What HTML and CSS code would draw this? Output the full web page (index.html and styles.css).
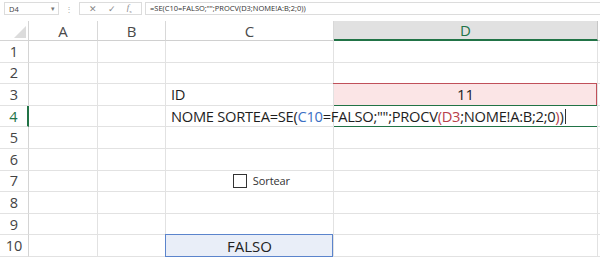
FILE: index.html
```html
<!DOCTYPE html>
<html>
<head>
<meta charset="utf-8">
<link rel="stylesheet" href="styles.css">
</head>
<body>
<div class="app">
  <div class="fbar">
    <div class="namebox"><span>D4</span><span class="arrow">▾</span></div>
    <div class="dots">⋮</div>
    <div class="btns">
      <span class="btn x">✕</span>
      <span class="btn ok">✓</span>
      <span class="btn fx"><i>f</i><sub>x</sub></span>
    </div>
    <div class="finput">=SE(C10=FALSO;"";PROCV(D3;NOME!A:B;2;0))</div>
  </div>
  <div class="sheet">
    <div class="corner"><div class="tri"></div></div>
    <div class="ch">A</div>
    <div class="ch">B</div>
    <div class="ch">C</div>
    <div class="ch sel">D</div>
    <div class="ch end"></div>

    <div class="rh">1</div><div class="c"></div><div class="c"></div><div class="c"></div><div class="c"></div><div class="c end"></div>
    <div class="rh">2</div><div class="c"></div><div class="c"></div><div class="c"></div><div class="c"></div><div class="c end"></div>
    <div class="rh">3</div><div class="c"></div><div class="c"></div><div class="c txt">ID</div><div class="c ref-red">11</div><div class="c end"></div>
    <div class="rh sel">4</div><div class="c"></div><div class="c"></div><div class="c txt">NOME SORTEA=SE(<span class="blue">C10</span>=FALSO;"";PROCV<span class="red">(D3</span>;NOME!A:B;2;0<span class="red">)</span>)<span class="caret"></span></div><div class="c active"></div><div class="c end"></div>
    <div class="rh">5</div><div class="c"></div><div class="c"></div><div class="c"></div><div class="c"></div><div class="c end"></div>
    <div class="rh">6</div><div class="c"></div><div class="c"></div><div class="c"></div><div class="c"></div><div class="c end"></div>
    <div class="rh">7</div><div class="c"></div><div class="c"></div><div class="c chk"><span class="box"></span><span class="lbl">Sortear</span></div><div class="c"></div><div class="c end"></div>
    <div class="rh">8</div><div class="c"></div><div class="c"></div><div class="c"></div><div class="c"></div><div class="c end"></div>
    <div class="rh">9</div><div class="c"></div><div class="c"></div><div class="c"></div><div class="c"></div><div class="c end"></div>
    <div class="rh">10</div><div class="c"></div><div class="c"></div><div class="c ref-blue">FALSO</div><div class="c"></div><div class="c end"></div>
  </div>
</div>
</body>
</html>
```

FILE: styles.css
```css
* { box-sizing: border-box; }
html, body { margin: 0; padding: 0; background: #fff; }
body { width: 600px; height: 260px; overflow: hidden; font-family: "Open Sans", "Noto Sans", sans-serif; color: #222; }

.fbar { height: 21px; display: flex; align-items: flex-start; padding-top: 2px; font-size: 7.5px; color: #444; }
.namebox { margin-left: 4px; width: 55px; height: 13px; border: 1px solid #dcdcdc; display: flex; align-items: center; justify-content: space-between; padding: 0 3px 0 4px; }
.namebox .arrow { font-size: 7px; color: #777; }
.dots { width: 20px; text-align: center; color: #aaa; font-size: 8px; line-height: 13px; }
.btns { width: 63px; height: 13px; border: 1px solid #dcdcdc; display: flex; align-items: center; justify-content: space-around; padding: 0 4px; color: #888; }
.btn { font-size: 9px; line-height: 1; }
.btn.fx { font-family: "Liberation Serif", serif; font-size: 9px; }
.btn.fx sub { font-size: 5px; }
.finput { margin-left: 3px; flex: 1; height: 13px; border: 1px solid #dcdcdc; border-right: 0; padding-left: 4px; line-height: 11px; color: #333; white-space: nowrap; letter-spacing: 0; }

.sheet { display: grid; grid-template-columns: 29px 69px 68px 168px 264px 2px; grid-template-rows: 20px repeat(10, 21.6px); }
.corner { border-right: 1px solid #d4d4d4; border-bottom: 1px solid #d4d4d4; position: relative; }
.tri { position: absolute; right: 2px; bottom: 2px; width: 0; height: 0; border-left: 12px solid transparent; border-bottom: 12px solid #dcdcdc; }
.ch { border-right: 1px solid #d8d8d8; border-bottom: 1px solid #d0d0d0; display: flex; align-items: center; justify-content: center; font-size: 15px; color: #4a4a4a; }
.ch.sel { background: #e1e1e1; color: #217346; border-bottom: 2px solid #217346; border-right: 1px solid #c6c6c6; }
.ch.end { border-right: 0; }
.rh { border-right: 1px solid #d4d4d4; border-bottom: 1px solid #e2e2e2; display: flex; align-items: center; justify-content: center; font-size: 14.5px; color: #444; }
.rh.sel { color: #217346; border-right: 2px solid #217346; }
.c { border-right: 1px solid #e2e2e2; border-bottom: 1px solid #e2e2e2; position: relative; }
.c.end { border-right: 0; }
.txt { display: flex; align-items: center; padding-left: 5px; font-family: "Open Sans", sans-serif; font-size: 14.7px; letter-spacing: -0.28px; white-space: nowrap; overflow: visible; z-index: 3; color: #1e1e1e; }
.blue { color: #3a6fc4; }
.red { color: #b8404a; }
.caret { display: inline-block; flex: none; width: 1px; height: 15px; background: #333; margin-left: 2px; }
.ref-red { background: #fbe5e6; display: flex; align-items: center; justify-content: center; font-size: 15px; }
.ref-red::after { content: ""; position: absolute; left: -1px; top: -1px; right: 0; bottom: -1px; border: 1px solid #c0505a; }
.active::after { content: ""; position: absolute; left: -1px; top: -1px; right: 0; bottom: -1px; border-top: 1px solid #217346; border-bottom: 1px solid #217346; }
.ref-blue { background: #e9eef8; display: flex; align-items: center; justify-content: center; font-size: 15px; }
.ref-blue::after { content: ""; position: absolute; left: -1px; top: -1px; right: 0; bottom: -1px; border: 1px solid #5b84cc; }
.chk { display: flex; align-items: center; justify-content: flex-end; padding-right: 43px; gap: 6px; }
.box { width: 14px; height: 14px; border: 1.5px solid #333; }
.lbl { font-size: 11px; letter-spacing: -0.1px; color: #333; }
```
